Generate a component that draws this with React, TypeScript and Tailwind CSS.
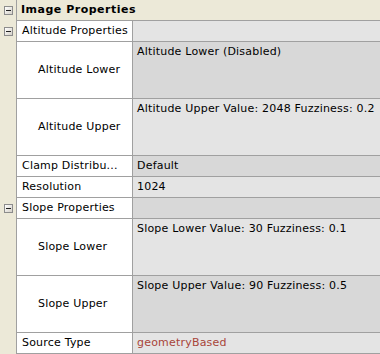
import React from "react";

type Row = {
  label: string;
  value?: string;
  kind: "group" | "tall" | "plain";
  dark: boolean;
  accent?: boolean;
};

const ROWS: Row[] = [
  { label: "Altitude Properties", kind: "group", dark: false },
  { label: "Altitude Lower", value: "Altitude Lower (Disabled)", kind: "tall", dark: true },
  { label: "Altitude Upper", value: "Altitude Upper Value: 2048 Fuzziness: 0.2", kind: "tall", dark: false },
  { label: "Clamp Distribu...", value: "Default", kind: "plain", dark: true },
  { label: "Resolution", value: "1024", kind: "plain", dark: false },
  { label: "Slope Properties", kind: "group", dark: true },
  { label: "Slope Lower", value: "Slope Lower Value: 30 Fuzziness: 0.1", kind: "tall", dark: false },
  { label: "Slope Upper", value: "Slope Upper Value: 90 Fuzziness: 0.5", kind: "tall", dark: true },
  { label: "Source Type", value: "geometryBased", kind: "plain", dark: false, accent: true },
];

function MinusBox() {
  return (
    <span className="mt-[6px] ml-[4px] flex h-[9px] w-[9px] items-center justify-center border border-[#8c8c8c] bg-gradient-to-br from-white to-[#d4d0c8]">
      <span className="h-px w-[5px] bg-[#222]" />
    </span>
  );
}

function PropRow({ row }: { row: Row }) {
  const h = row.kind === "tall" ? "h-[57px]" : "h-[21px]";
  return (
    <div className={`flex ${h}`}>
      <div className="w-[17px] shrink-0 border-r border-[#a0a0a0] bg-[#ece9d8]">
        {row.kind === "group" && <MinusBox />}
      </div>
      <div className="flex flex-1 border-b border-[#a0a0a0]">
        <div
          className={`flex w-[116px] shrink-0 items-center border-r border-[#a0a0a0] bg-white whitespace-nowrap ${
            row.kind === "tall" ? "pl-[21px]" : "pl-[5px]"
          }`}
        >
          {row.label}
        </div>
        <div
          className={`flex-1 whitespace-nowrap pl-[4px] ${row.dark ? "bg-[#d8d8d8]" : "bg-[#e4e4e4]"} ${
            row.kind === "tall" ? "pt-[3px]" : "flex items-center"
          } ${row.accent ? "text-[#a8443a]" : ""}`}
        >
          {row.value}
        </div>
      </div>
    </div>
  );
}

export default function App() {
  return (
    <div
      className="flex h-[354px] w-[380px] flex-col overflow-hidden bg-[#ece9d8] text-[11px] leading-[14px] tracking-[0.2px] text-black"
      style={{ fontFamily: '"DejaVu Sans", Verdana, sans-serif' }}
    >
      <div className="flex h-[21px]">
        <div className="w-[17px] shrink-0 border-r border-[#a0a0a0] bg-[#ece9d8]">
          <MinusBox />
        </div>
        <div className="flex flex-1 items-center border-b border-[#a0a0a0] pl-[4px] font-bold tracking-[0.5px]">
          Image Properties
        </div>
      </div>
      {ROWS.map((r) => (
        <PropRow key={r.label} row={r} />
      ))}
    </div>
  );
}
